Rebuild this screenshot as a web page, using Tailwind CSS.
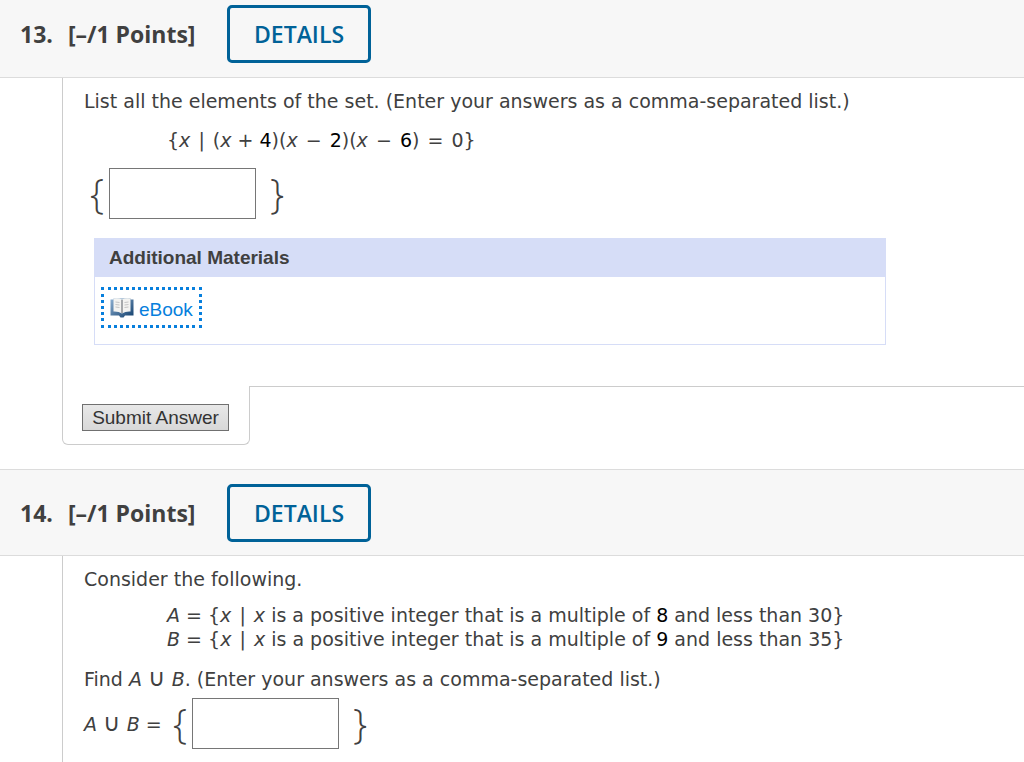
<!DOCTYPE html>
<html lang="en">
<head>
<meta charset="utf-8">
<meta name="viewport" content="width=device-width, initial-scale=1">
<title>Assignment questions</title>
<script src="https://cdn.jsdelivr.net/npm/@tailwindcss/browser@4"></script>
</head>
<body class="bg-white text-[#404040] font-['Verdana','DejaVu_Sans',sans-serif] text-[19px] leading-6 overflow-x-hidden">
<main>
  <section>
    <header class="flex items-center bg-[#f7f7f7] border-b border-[#dcdcdc] pl-5 pt-[5px] pb-3.5 font-['Open_Sans',sans-serif]">
      <h2 class="flex w-[207px] gap-[15px] text-[23px] leading-8 font-bold whitespace-nowrap"><span>13.</span><span>[–/1 Points]</span></h2>
      <button type="button" class="w-[144px] h-[58px] rounded-[5px] border-3 border-[#006298] text-[#006298] text-[23px] font-semibold">DETAILS</button>
    </header>
    <div class="ml-[62px]">
      <div class="border-l border-[#ccc] pl-[21px] pt-[11px] pb-[41px]">
        <p>List all the elements of the set. (Enter your answers as a comma-separated list.)</p>
        <p class="pl-[83px] mt-[15px]">{<i>x</i> <span class="mx-0.5">|</span> (<i>x</i> + <span class="text-black">4</span>)(<i>x</i> <span class="mx-0.5">−</span> <span class="text-black">2</span>)(<i>x</i> <span class="mx-0.5">−</span> <span class="text-black">6</span>) <span class="mx-0.5">=</span> 0}</p>
        <div class="flex items-center mt-4 h-[51px]">
          <span class="w-[25px] pl-1.5 pb-0.5 text-[40px] leading-[51px] font-light font-['Open_Sans',sans-serif]">{</span>
          <input type="text" aria-label="Elements of the set" class="w-[147px] h-[51px] border border-[#767676] bg-white px-2">
          <span class="pl-3.5 pb-0.5 text-[40px] leading-[51px] font-light font-['Open_Sans',sans-serif]">}</span>
        </div>
        <div class="ml-2.5 mt-[19px] max-w-[792px] border border-[#d6ddf7] font-['Liberation_Sans',sans-serif]">
          <h3 class="bg-[#d6ddf7] pl-3.5 h-[38px] leading-[38px] text-[19px] font-bold">Additional Materials</h3>
          <div class="pl-1.5 pt-2.5 pb-4">
            <a href="#ebook" class="inline-flex items-center gap-[5px] h-[41px] w-[101px] px-[6px] border-3 border-dotted border-[#077fdd] text-[#077fdd] text-[19px]">
              <svg class="w-6 h-5 shrink-0" viewBox="0 0 24 20" aria-hidden="true">
                <defs><linearGradient id="cover" x1="0" y1="0" x2="1" y2="1"><stop offset="0" stop-color="#8db0d2"/><stop offset="1" stop-color="#123f6c"/></linearGradient></defs>
                <path d="M.5 1.500h3V.5h17v1h3v16h-8.500l-1.500 2h-3l-1.500-2H.5z" fill="url(#cover)"/>
                <path d="M3.500.5q5-.8 8.500 1q3.500-1.800 8.500-1v13q-5-.3-8.500 2q-3.500-2.300-8.500-2z" fill="#f3f3f1"/>
                <path d="M11 2v13h2V2z" fill="#a5a8ab"/>
                <path d="M5.500 4l4 .5M5.500 6.500l4 .5M5.500 9l4 .5M14.500 4.500l4-.5M14.500 7l4-.5M14.500 9.500l4-.5" stroke="#c4c4c4" stroke-width="1"/>
              </svg>
              <span class="pt-1">eBook</span>
            </a>
          </div>
        </div>
      </div>
      <div class="flex">
        <div class="w-[188px] border-x border-b border-[#ccc] rounded-b-md pl-[19px] pt-[18px] pb-[13px]">
          <button type="button" class="block w-[147px] h-[27px] border border-[#707070] bg-linear-to-b from-[#e8e8e8] to-[#d8d8d8] text-[#333] text-[19px] leading-6 whitespace-nowrap font-['Liberation_Sans',sans-serif]">Submit Answer</button>
        </div>
        <div class="flex-1 border-t border-[#ccc]"></div>
      </div>
    </div>
  </section>

  <section class="mt-6">
    <header class="flex items-center bg-[#f7f7f7] border-y border-[#dcdcdc] pl-5 pt-3.5 pb-[13px] font-['Open_Sans',sans-serif]">
      <h2 class="flex w-[207px] gap-[15px] text-[23px] leading-8 font-bold whitespace-nowrap"><span>14.</span><span>[–/1 Points]</span></h2>
      <button type="button" class="w-[144px] h-[58px] rounded-[5px] border-3 border-[#006298] text-[#006298] text-[23px] font-semibold">DETAILS</button>
    </header>
    <div class="ml-[62px] border-l border-[#ccc] pl-[21px] pt-[11px] pb-5">
      <p>Consider the following.</p>
      <div class="pl-[83px] mt-3">
        <p><i>A</i> = {<i>x</i> <span class="mx-0.5">|</span> <i>x</i> is a positive integer that is a multiple of <span class="text-black">8</span> and less than 30}</p>
        <p><i>B</i> = {<i>x</i> <span class="mx-0.5">|</span> <i>x</i> is a positive integer that is a multiple of <span class="text-black">9</span> and less than 35}</p>
      </div>
      <p class="mt-[15px]">Find <i>A</i> <span class="text-[24px] leading-none">∪</span> <i>B</i>. (Enter your answers as a comma-separated list.)</p>
      <div class="flex items-center mt-[7px] h-[51px]">
        <label for="union" class="w-[83px] whitespace-nowrap"><i>A</i> <span class="text-[24px] leading-none">∪</span> <i>B</i> =</label>
        <span class="w-[25px] pl-1.5 pb-0.5 text-[40px] leading-[51px] font-light font-['Open_Sans',sans-serif]">{</span>
        <input id="union" type="text" class="w-[147px] h-[51px] border border-[#767676] bg-white px-2">
        <span class="pl-3.5 pb-0.5 text-[40px] leading-[51px] font-light font-['Open_Sans',sans-serif]">}</span>
      </div>
    </div>
  </section>
</main>
</body>
</html>
